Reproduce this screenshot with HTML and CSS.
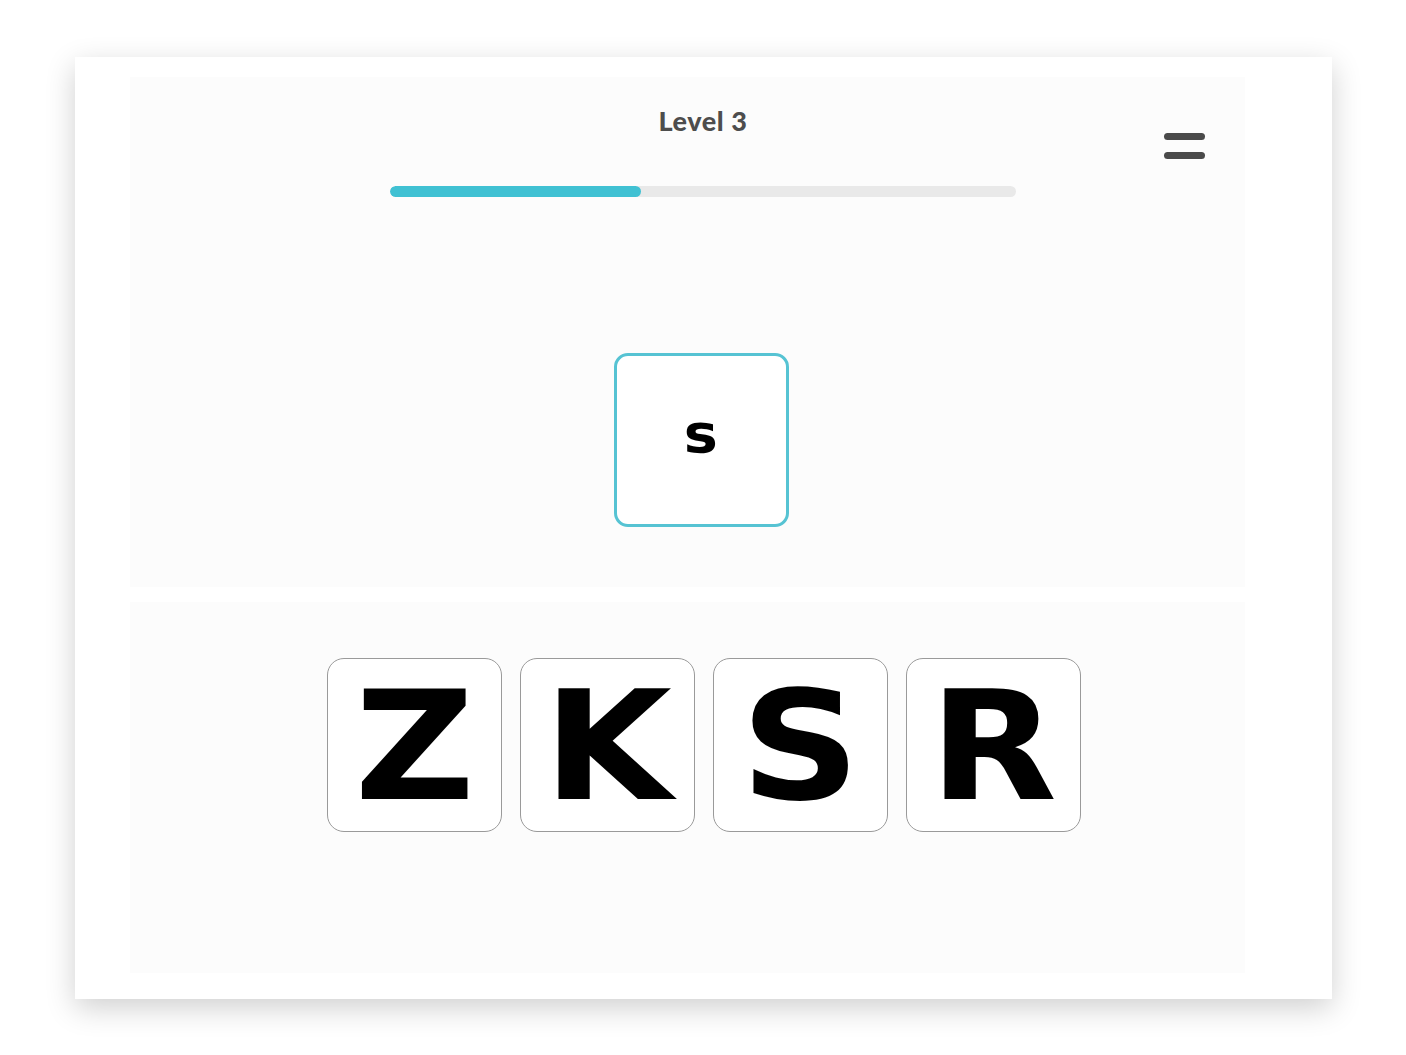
FILE: index.html
```html
<!DOCTYPE html>
<html lang="en">
<head>
<meta charset="utf-8">
<title>Level 3</title>
<link rel="stylesheet" href="styles.css">
</head>
<body>
<main class="card">
  <section class="panel panel-top">
    <header class="header">
      <div class="header-center">
        <h1 class="title">Level 3</h1>
        <div class="progress"><div class="progress-fill" style="width: 251px"></div></div>
      </div>
      <button class="menu" aria-label="Menu">
        <span class="menu-bar"></span>
        <span class="menu-bar"></span>
      </button>
    </header>
    <div class="target"><span class="target-letter">s</span></div>
  </section>
  <section class="panel panel-bottom">
    <div class="tiles">
      <div class="tile"><span class="tile-letter">Z</span></div>
      <div class="tile"><span class="tile-letter">K</span></div>
      <div class="tile"><span class="tile-letter">S</span></div>
      <div class="tile"><span class="tile-letter">R</span></div>
    </div>
  </section>
</main>
</body>
</html>
```
FILE: styles.css
```css
* { box-sizing: border-box; }

html, body {
  margin: 0;
  padding: 0;
  background: #ffffff;
}

body {
  padding: 57px 74px 56px 75px;
  font-family: Lato, "Open Sans", sans-serif;
}

.card {
  width: 1257px;
  height: 942px;
  background: #ffffff;
  box-shadow: 0 9px 28px rgba(0, 0, 0, 0.19);
  padding: 20px 87px 26px 55px;
  display: flex;
  flex-direction: column;
  gap: 15px;
}

.panel {
  background: #fcfcfc;
  padding-left: 31px;
}

.panel-top {
  height: 510px;
  padding-top: 28px;
  display: flex;
  flex-direction: column;
  align-items: center;
}

.header {
  width: 100%;
  display: grid;
  grid-template-columns: 1fr auto 1fr;
}

.header-center {
  grid-column: 2;
  display: flex;
  flex-direction: column;
  align-items: center;
}

.title {
  margin: 0;
  font-family: Lato, "Open Sans", sans-serif;
  font-weight: 900;
  font-size: 27px;
  line-height: 32px;
  color: #4d4d4d;
  letter-spacing: 0.6px;
}

.progress {
  margin-top: 49px;
  width: 626px;
  height: 11px;
  border-radius: 6px;
  background: #e9e9e9;
  overflow: hidden;
}

.progress-fill {
  height: 100%;
  border-radius: 6px;
  background: #40c1d3;
}

.menu {
  grid-column: 3;
  justify-self: end;
  align-self: start;
  margin: 28px 40px 0 0;
  padding: 0;
  border: 0;
  background: transparent;
  display: flex;
  flex-direction: column;
  gap: 12px;
}

.menu-bar {
  display: block;
  width: 41px;
  height: 7px;
  border-radius: 4px;
  background: #4a4a4a;
}

.target {
  margin-top: 156px;
  margin-right: 4px;
  width: 175px;
  height: 174px;
  border: 3px solid #56c3d3;
  border-radius: 14px;
  background: #ffffff;
  display: flex;
  align-items: center;
  justify-content: center;
}

.target-letter {
  font-family: "DejaVu Sans", sans-serif;
  font-weight: 700;
  font-size: 53px;
  line-height: 1;
  color: #000000;
  transform: scaleX(1.08);
  margin-top: -13px;
}

.panel-bottom {
  flex: 1;
  padding-top: 56px;
  display: flex;
  justify-content: center;
  align-items: flex-start;
}

.tiles {
  display: flex;
  gap: 18px;
  margin-left: 2px;
}

.tile {
  width: 175px;
  height: 174px;
  border: 1px solid #9a9a9a;
  border-radius: 17px;
  background: #ffffff;
  display: flex;
  align-items: center;
  justify-content: center;
}

.tile-letter {
  font-family: "DejaVu Sans", sans-serif;
  font-weight: 700;
  font-size: 151px;
  line-height: 1;
  color: #000000;
  transform: scaleX(1.1);
  margin-top: 4px;
}
```
